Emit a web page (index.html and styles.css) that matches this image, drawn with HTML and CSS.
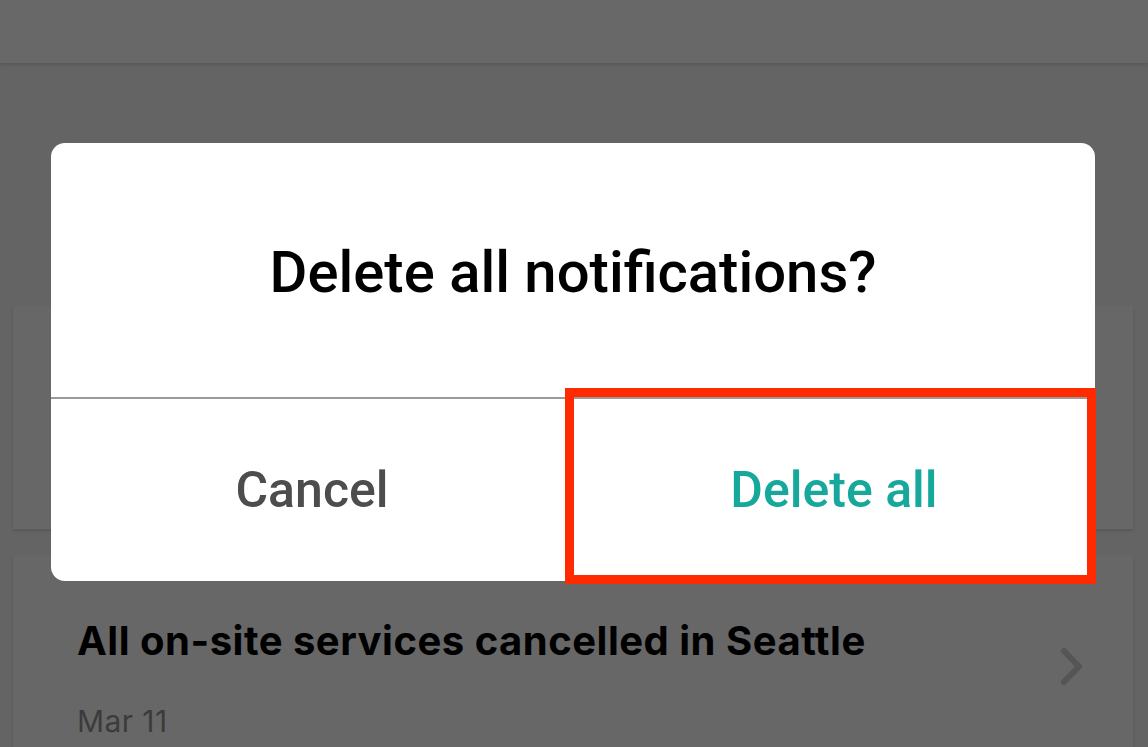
FILE: index.html
```html
<!DOCTYPE html>
<html>
<head>
<meta charset="utf-8">
<link rel="stylesheet" href="styles.css">
</head>
<body>
<div class="screen">
  <header class="topbar"></header>
  <main class="list">
    <div class="card card-first"></div>
    <div class="card card-second">
      <div class="card-text">
        <div class="card-title">All on-site services cancelled in Seattle</div>
        <div class="card-date">Mar 11</div>
      </div>
      <svg class="chevron" width="26" height="40" viewBox="0 0 26 40"><path d="M5 4 L20 19.5 L5 35" fill="none" stroke="#555" stroke-width="6" stroke-linecap="round" stroke-linejoin="round"/></svg>
    </div>
  </main>
  <div class="dialog">
    <div class="dialog-title">Delete all notifications?</div>
    <div class="dialog-actions">
      <div class="action cancel">Cancel</div>
      <div class="action confirm">Delete all</div>
    </div>
  </div>
</div>
</body>
</html>
```

FILE: styles.css
```css
html, body {
  margin: 0;
  padding: 0;
  background: #646464;
  font-family: Roboto, "Liberation Sans", sans-serif;
}
.screen {
  position: relative;
  width: 1148px;
  height: 747px;
  overflow: hidden;
}
.topbar {
  height: 63px;
  background: #686868;
  box-shadow: 0 2px 3px rgba(0,0,0,0.12);
}
.list {
  padding: 243px 15px 0 13px;
  display: flex;
  flex-direction: column;
  gap: 26px;
}
.card {
  background: #676767;
  box-shadow: 0 2px 3px rgba(0,0,0,0.12);
}
.card-first {
  height: 223px;
}
.card-second {
  height: 220px;
  display: flex;
  align-items: flex-start;
  justify-content: space-between;
  padding: 0 48px 0 64px;
}
.card-text {
  padding-top: 63px;
  font-family: Inter, Roboto, sans-serif;
}
.card-title {
  font-size: 40px;
  font-weight: 700;
  letter-spacing: 0.5px;
  color: #000;
  line-height: 46px;
}
.card-date {
  margin-top: 40px;
  font-size: 30px;
  font-weight: 400;
  letter-spacing: 0.4px;
  color: #3b3b3b;
  line-height: 34px;
}
.chevron {
  margin-top: 92px;
}
.dialog {
  position: absolute;
  left: 51px;
  top: 143px;
  width: 1044px;
  height: 438px;
  background: #fff;
  border-radius: 14px;
  display: flex;
  flex-direction: column;
}
.dialog-title {
  height: 256px;
  box-sizing: border-box;
  border-bottom: 2px solid #9a9a9a;
  display: flex;
  align-items: center;
  justify-content: center;
  font-size: 58px;
  font-weight: 500;
  color: #000;
  padding-top: 4px;
}
.dialog-actions {
  flex: 1;
  display: flex;
}
.action {
  flex: 1;
  display: flex;
  align-items: center;
  justify-content: center;
  font-size: 50px;
  font-weight: 500;
}
.cancel {
  color: #4d4d4d;
}
.confirm {
  position: relative;
  color: #16a99b;
}
.confirm::after {
  content: "";
  position: absolute;
  left: -8px;
  top: -11px;
  right: -1px;
  bottom: -3px;
  border: 9px solid #ff2a00;
}
```
